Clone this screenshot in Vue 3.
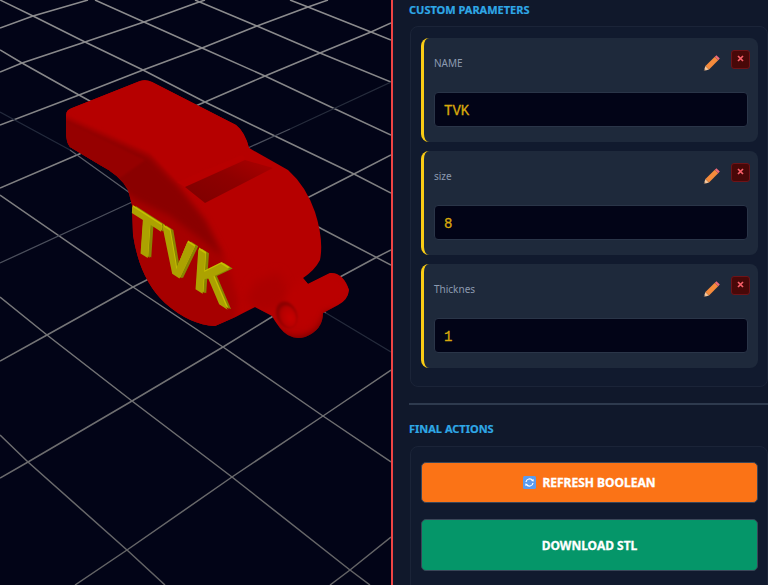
<script setup>
const gridLines = [
  [[0,0],[33,16],[85,42],[143,70],[205,102],[277,137],[354,174],[391,193]],
  [[95,0],[144,22],[202,48],[265,76],[333,108],[391,135]],
  [[195,0],[257,26],[320,53],[391,82]],
  [[290,0],[308,7],[371,32],[391,40]],
  [[0,50],[22,63],[79,95],[322,229],[391,265]],
  [[0,195],[133,287],[223,347],[323,416],[391,462]],
  [[0,297],[47,335],[132,401],[232,477],[350,570],[370,585]],
  [[0,435],[28,462],[127,550],[165,585]],
  [[0,28],[33,16],[88,0]],
  [[0,72],[22,63],[85,42],[144,22],[199,2],[205,0]],
  [[0,125],[79,95],[143,70],[202,48],[257,26],[308,7],[328,0]],
  [[0,188],[77,155],[205,102],[265,76],[320,53],[371,32],[391,23]],
  [[0,361],[47,335],[133,287],[354,174],[391,155]],
  [[0,478],[28,462],[132,401],[223,347],[270,318],[340,277],[377,257],[391,250]],
  [[391,370],[323,416],[232,477],[127,550],[75,585]],
  [[391,537],[350,570],[330,585]],
].map((l) => l.map((p) => p.join(',')).join(' '))

const dimLines = [
  { pts: '0,263 130,203 250,147 290,129', color: '#4b4f5c' },
  { pts: '290,129 391,82', color: '#262c3c' },
  { pts: '0,112 70,150', color: '#232a3c' },
  { pts: '70,150 130,193 326,313', color: '#5a5c66' },
  { pts: '326,313 391,352', color: '#252b3c' },
]

const params = [
  { label: 'NAME', value: 'TVK' },
  { label: 'size', value: '8' },
  { label: 'Thicknes', value: '1' },
]

const tvkMatrix = 'matrix(1.24 0.8 -0.1 1.45 129 246)'

const silhouette =
  'M72,108 L140,81 Q146,79 152,82 L236,125 Q245,132 249,148 L288,170 Q306,186 315,212 Q324,240 320,260 Q315,270 303,278 L308,284 L330,273 Q343,272 349,290 Q348,300 338,305 L323,313 Q323,330 305,337 Q290,341 280,328 Q274,320 272,316 L255,307 Q235,318 215,326 Q190,325 165,303 Q140,280 133,235 L132,205 L128,190 Q120,175 100,165 L70,147 Q66,143 66,130 L66,115 Q66,110 72,108 Z'
</script>

<template>
  <div class="screen">
    <div class="viewport">
      <svg class="scene" width="391" height="585" viewBox="0 0 391 585">
        <defs>
          <clipPath id="body-clip"><path :d="silhouette" /></clipPath>
          <filter id="soft-xl" x="-30%" y="-30%" width="160%" height="160%"><feGaussianBlur stdDeviation="5" /></filter>
          <filter id="soft" x="-20%" y="-20%" width="140%" height="140%"><feGaussianBlur stdDeviation="3" /></filter>
          <filter id="soft-small" x="-20%" y="-20%" width="140%" height="140%"><feGaussianBlur stdDeviation="1" /></filter>
          <linearGradient id="grid-fade" gradientUnits="userSpaceOnUse" x1="0" y1="0" x2="0" y2="585">
            <stop offset="0" stop-color="#8c8c8e" />
            <stop offset="1" stop-color="#626264" />
          </linearGradient>
          <linearGradient id="slot-grad" x1="0" y1="1" x2="1" y2="0">
            <stop offset="0" stop-color="#7e0000" />
            <stop offset="0.55" stop-color="#8e0000" />
            <stop offset="1" stop-color="#ad0000" />
          </linearGradient>
          <radialGradient id="hole-grad" cx="0.6" cy="0.6" r="0.6">
            <stop offset="0" stop-color="#c80000" />
            <stop offset="0.75" stop-color="#b60000" />
            <stop offset="1" stop-color="#a80000" />
          </radialGradient>
        </defs>

        <polyline v-for="(pts, i) in gridLines" :key="i" :points="pts" class="grid-line" stroke="url(#grid-fade)" />
        <polyline v-for="(l, i) in dimLines" :key="'d' + i" :points="l.pts" class="grid-dim" :stroke="l.color" />

        <path :d="silhouette" fill="#b60000" />
        <g clip-path="url(#body-clip)">
          <path d="M125,200 L172,182 L205,222 L228,265 L238,300 L232,335 L125,335 Z" fill="#a60000" filter="url(#soft)" />
          <path d="M60,116 L150,156 L178,186 L205,220 L224,258 L202,240 L170,216 L128,196 L100,172 L60,152 Z" fill="#8a0000" filter="url(#soft)" />
          <path d="M60,118 L145,160 L120,178 L60,155 Z" fill="#960000" filter="url(#soft-small)" />
          <path d="M60,106 L145,76 L240,124 L252,150 L178,182 L150,152 L66,113 Z" fill="#b60000" filter="url(#soft-small)" />
          <path d="M255,282 L278,272 L288,290 L282,305 L262,312 L245,300 Z" fill="#ac0000" filter="url(#soft-xl)" />
          <path d="M300,280 L328,270 L352,288 L340,304 L320,314 L305,330 L285,320 Q283,295 300,280 Z" fill="#ba0000" filter="url(#soft)" />
          <path d="M272,322 Q285,340 302,336 Q320,332 325,312 L340,310 L335,345 L285,350 Z" fill="#7c0000" filter="url(#soft)" />
        </g>
        <polygon points="177,182 242,155 246,158 185,187" fill="#b80000" />
        <polygon points="185,187 245,160 273,168 205,203" fill="url(#slot-grad)" />
        <ellipse cx="286.5" cy="314.5" rx="10" ry="13.5" transform="rotate(-22 286.5 314.5)" fill="#8c0000" filter="url(#soft-small)" />
        <ellipse cx="288" cy="316.5" rx="8.5" ry="11.5" transform="rotate(-22 288 316.5)" fill="url(#hole-grad)" filter="url(#soft-small)" />

        <g class="tvk">
          <g :transform="'translate(3.5 -0.5) ' + tvkMatrix"><text class="tvk-side">TVK</text></g>
          <g :transform="'translate(2 -0.3) ' + tvkMatrix"><text class="tvk-side">TVK</text></g>
          <g :transform="'translate(0.6 -1.6) ' + tvkMatrix"><text class="tvk-top">TVK</text></g>
          <g :transform="tvkMatrix"><text class="tvk-face">TVK</text></g>
        </g>
      </svg>
    </div>

    <aside class="panel">
      <h3 class="section-title">CUSTOM PARAMETERS</h3>
      <div class="card params-card">
        <div v-for="p in params" :key="p.label" class="param">
          <div class="param-head">
            <span class="param-label">{{ p.label }}</span>
            <svg class="pencil" width="18" height="18" viewBox="0 0 18 18">
              <polygon points="0.8,17 2.4,12 6,15.6" fill="#f6c79c" />
              <polygon points="0.8,17 1.4,15 3,16.5" fill="#5a4a44" />
              <polygon points="2.4,12 11.8,2.8 15.2,6.2 6,15.6" fill="#f58b3c" />
              <polygon points="11.8,2.8 13.4,1.2 16.8,4.6 15.2,6.2" fill="#f06a78" />
            </svg>
            <button class="remove" type="button">
              <svg width="7" height="7" viewBox="0 0 7 7">
                <path d="M1,1 L6,6 M6,1 L1,6" stroke="#f8606a" stroke-width="1.7" />
              </svg>
            </button>
          </div>
          <div class="param-input">{{ p.value }}</div>
        </div>
      </div>

      <hr class="divider" />

      <h3 class="section-title">FINAL ACTIONS</h3>
      <div class="card actions-card">
        <button class="action refresh" type="button">
          <svg width="13" height="13" viewBox="0 0 13 13">
            <rect width="13" height="13" rx="1.5" fill="#5b9cf0" />
            <path d="M3,6 A3.6,3.6 0 0 1 9.6,4.6 M10,7 A3.6,3.6 0 0 1 3.4,8.4" fill="none" stroke="#fff" stroke-width="1.2" />
            <polygon points="8.2,5 10.8,5.4 10.4,2.8" fill="#fff" />
            <polygon points="4.8,8 2.2,7.6 2.6,10.2" fill="#fff" />
          </svg>
          REFRESH BOOLEAN
        </button>
        <button class="action download" type="button">DOWNLOAD STL</button>
      </div>
    </aside>
  </div>
</template>

<style>
html, body { margin: 0; background: #020417; }
</style>

<style scoped>
.screen {
  display: flex;
  width: 768px;
  height: 585px;
  overflow: hidden;
  font-family: "Noto Sans", "Open Sans", sans-serif;
  background: #020417;
}
.viewport {
  flex: 0 0 391px;
  height: 585px;
  border-right: 2px solid #ef4444;
  background: #020417;
}
.scene { display: block; }
.grid-line { fill: none; stroke-width: 1.5; }
.grid-dim { fill: none; stroke-width: 1.3; }
.tvk text { font-family: "Liberation Sans", sans-serif; font-weight: 700; font-size: 40px; }
.tvk-side { fill: #8a8400; }
.tvk-top { fill: #c6be00; }
.tvk-face { fill: #aca200; }

.panel {
  flex: 1;
  min-width: 0;
  padding: 2px 0 0 16px;
  background: #10182b;
}
.section-title {
  margin: 0;
  font-size: 11px;
  line-height: 15px;
  font-weight: 700;
  color: #2fa8e6;
  -webkit-text-stroke: 0.2px #2fa8e6;
}
.card {
  margin-top: 9px;
  margin-left: 1px;
  padding: 11px 9px 0 10px;
  border: 1px solid #1b2438;
  border-radius: 8px;
  background: #111a2e;
}
.params-card { height: 361px; box-sizing: border-box; }
.actions-card { height: 160px; margin-top: 10px; box-sizing: border-box; padding-top: 15px; }
.param {
  box-sizing: border-box;
  height: 104px;
  margin-bottom: 9px;
  padding: 12px 10px 0 10px;
  border-left: 3px solid #facc15;
  border-radius: 8px;
  background: #1e293b;
}
.param-head {
  display: flex;
  align-items: flex-start;
  height: 42px;
}
.param-label {
  flex: 1;
  margin-top: 6px;
  font-size: 10px;
  line-height: 14px;
  color: #8c9ab0;
}
.pencil { margin: 4px 10px 0 0; }
.remove {
  display: flex;
  align-items: center;
  justify-content: center;
  box-sizing: border-box;
  width: 19px;
  height: 19px;
  margin-right: -2px;
  padding: 0 0 3px;
  border: 1px solid #6e1318;
  border-radius: 3px;
  background: #480808;
}
.param-input {
  box-sizing: border-box;
  height: 35px;
  padding-left: 9px;
  border: 1px solid #2a3548;
  border-radius: 4px;
  background: #020417;
  font-family: "Liberation Mono", monospace;
  font-size: 14px;
  line-height: 37px;
  color: #d9a90c;
  -webkit-text-stroke: 0.3px #d9a90c;
  overflow: hidden;
}
.divider {
  height: 2px;
  margin: 16px 0;
  border: 0;
  background: #2e3a4e;
}
.action {
  display: flex;
  align-items: center;
  justify-content: center;
  gap: 6px;
  box-sizing: border-box;
  width: 100%;
  border: 1px solid #3a4658;
  border-radius: 5px;
  font-family: "Noto Sans", sans-serif;
  font-size: 12px;
  font-weight: 700;
  color: #fff;
  -webkit-text-stroke: 0.3px #fff;
}
.refresh { height: 41px; margin-bottom: 16px; background: #fb7316; }
.download { height: 52px; background: #059669; }
</style>
